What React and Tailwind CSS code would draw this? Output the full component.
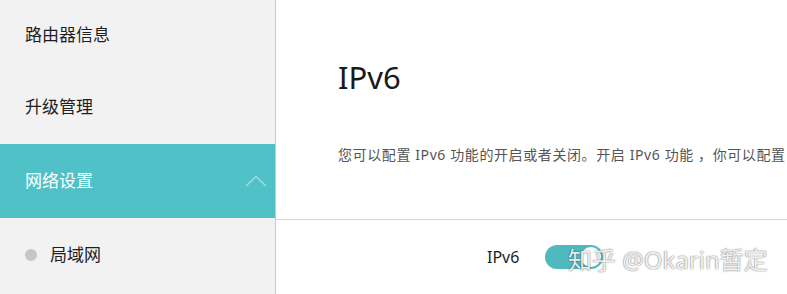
import React from "react";

const font = { fontFamily: '"Noto Sans", "Noto Sans CJK SC", sans-serif' };

export default function App() {
  return (
    <div className="flex h-[294px] w-full overflow-hidden bg-white relative" style={font}>
      {/* Sidebar */}
      <div className="w-[276px] shrink-0 bg-[#f2f2f2] border-r border-[#c9c9c9] flex flex-col">
        <div className="h-[70px] flex items-center pl-[25px] text-[17px] text-[#1e1e1e]">路由器信息</div>
        <div className="h-[74px] flex items-center pl-[25px] text-[17px] text-[#1e1e1e]">升级管理</div>
        <div className="h-[74px] flex items-center justify-between pl-[25px] pr-[8px] bg-[#4fc1c7] text-[17px] text-white">
          <span>网络设置</span>
          <svg width="22" height="12" viewBox="0 0 22 12" fill="none" stroke="rgba(255,255,255,0.45)" strokeWidth="1.6">
            <path d="M1 11 L11 1.5 L21 11" />
          </svg>
        </div>
        <div className="h-[74px] flex items-center pl-[25px] gap-[13px] text-[17px] text-[#1e1e1e]">
          <span className="w-[12px] h-[12px] rounded-full bg-[#c5c5cf]"></span>
          <span>局域网</span>
        </div>
      </div>

      {/* Main */}
      <div className="flex-1 min-w-0 flex flex-col">
        <div className="h-[221px] border-b border-[#d9d9d9] pl-[62px] pt-[57px] whitespace-nowrap overflow-hidden">
          <div className="text-[31px] leading-[40px] text-[#1a1a1a]">IPv6</div>
          <div className="mt-[48px] text-[14px] leading-[20px] tracking-[0.6px] text-[#555]">
            您可以配置 IPv6 功能的开启或者关闭。开启 IPv6 功能 ，你可以配置
          </div>
        </div>
        <div className="h-[75px] flex items-center pl-[211px] gap-[26px]">
          <span className="text-[16px] text-[#1e1e1e]">IPv6</span>
          <div className="w-[58px] h-[24px] rounded-full bg-[#4fb9bf] flex items-center justify-end pr-[2px]">
            <span className="w-[20px] h-[20px] rounded-full bg-white"></span>
          </div>
        </div>
      </div>

      {/* watermark */}
      <div className="absolute left-[568px] top-[244px] text-[24px] leading-[32px] text-white/90 whitespace-nowrap [text-shadow:0_0_1px_rgba(0,0,0,0.55),0_0_2px_rgba(0,0,0,0.3)]">
        知乎 @Okarin暂定
      </div>
    </div>
  );
}
